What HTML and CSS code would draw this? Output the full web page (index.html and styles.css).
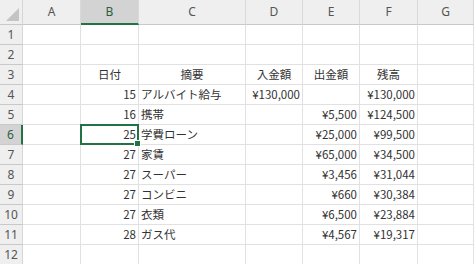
FILE: index.html
```html
<!DOCTYPE html>
<html lang="ja">
<head>
  <meta charset="UTF-8" />
  <title>家計簿</title>
  <link rel="stylesheet" href="styles.css">
</head>
<body>
  <div class="sheet">
    <div class="hd corner"></div>
    <div class="hd col">A</div>
    <div class="hd col sel">B</div>
    <div class="hd col">C</div>
    <div class="hd col">D</div>
    <div class="hd col">E</div>
    <div class="hd col">F</div>
    <div class="hd col">G</div>

    <div class="hd row">1</div>
    <div class="c"></div><div class="c"></div><div class="c"></div><div class="c"></div><div class="c"></div><div class="c"></div><div class="c"></div>

    <div class="hd row">2</div>
    <div class="c"></div><div class="c"></div><div class="c"></div><div class="c"></div><div class="c"></div><div class="c"></div><div class="c"></div>

    <div class="hd row">3</div>
    <div class="c"></div><div class="c mid">日付</div><div class="c mid">摘要</div><div class="c mid">入金額</div><div class="c mid">出金額</div><div class="c mid">残高</div><div class="c"></div>

    <div class="hd row">4</div>
    <div class="c"></div><div class="c num">15</div><div class="c">アルバイト給与</div><div class="c num">¥130,000</div><div class="c num"></div><div class="c num">¥130,000</div><div class="c"></div>

    <div class="hd row">5</div>
    <div class="c"></div><div class="c num">16</div><div class="c">携帯</div><div class="c num"></div><div class="c num">¥5,500</div><div class="c num">¥124,500</div><div class="c"></div>

    <div class="hd row sel">6</div>
    <div class="c"></div><div class="c num active">25</div><div class="c">学費ローン</div><div class="c num"></div><div class="c num">¥25,000</div><div class="c num">¥99,500</div><div class="c"></div>

    <div class="hd row">7</div>
    <div class="c"></div><div class="c num">27</div><div class="c">家賃</div><div class="c num"></div><div class="c num">¥65,000</div><div class="c num">¥34,500</div><div class="c"></div>

    <div class="hd row">8</div>
    <div class="c"></div><div class="c num">27</div><div class="c">スーパー</div><div class="c num"></div><div class="c num">¥3,456</div><div class="c num">¥31,044</div><div class="c"></div>

    <div class="hd row">9</div>
    <div class="c"></div><div class="c num">27</div><div class="c">コンビニ</div><div class="c num"></div><div class="c num">¥660</div><div class="c num">¥30,384</div><div class="c"></div>

    <div class="hd row">10</div>
    <div class="c"></div><div class="c num">27</div><div class="c">衣類</div><div class="c num"></div><div class="c num">¥6,500</div><div class="c num">¥23,884</div><div class="c"></div>

    <div class="hd row">11</div>
    <div class="c"></div><div class="c num">28</div><div class="c">ガス代</div><div class="c num"></div><div class="c num">¥4,567</div><div class="c num">¥19,317</div><div class="c"></div>

    <div class="hd row">12</div>
    <div class="c"></div><div class="c"></div><div class="c"></div><div class="c"></div><div class="c"></div><div class="c"></div><div class="c"></div>
  </div>
</body>
</html>
```

FILE: styles.css
```css
body { margin: 0; background: #fff; font-family: "Noto Sans CJK JP", "Noto Sans", sans-serif; }

.sheet {
  display: grid;
  grid-template-columns: 23px 58px 58px 107px 57px 57px 58px 1fr;
  grid-template-rows: 25px repeat(12, 20px);
  font-size: 11.5px; color: #333;
}

.sheet > div { box-sizing: border-box; line-height: 19px; white-space: nowrap; overflow: hidden; }

.hd {
  background: #efefef; color: #555;
  border-right: 1px solid #d6d6d6; border-bottom: 1px solid #c9c9c9;
  text-align: center; font-family: "Noto Sans", sans-serif; font-size: 12px;
}
.hd.col { line-height: 24px; border-right-color: #d9d9d9; }
.hd.col.sel { background: #d3d3d3; color: #2b5f3e; border-bottom: 2px solid #217346; }
.hd.row.sel { background: #d3d3d3; color: #2b5f3e; border-right: 2px solid #217346; }

.corner { position: relative; }
.corner::after {
  content: ""; position: absolute; right: 3px; bottom: 3px;
  border-left: 13px solid transparent; border-bottom: 13px solid #c4c4c4;
}

.c { border-right: 1px solid #e1e1e1; border-bottom: 1px solid #e1e1e1; padding: 0 2px; }
.c.num { text-align: right; }
.c.mid { text-align: center; }

.c.active { position: relative; overflow: visible; }
.c.active::before {
  content: ""; position: absolute; left: -1px; top: -1px; right: -1px; bottom: -1px;
  border: 2px solid #217346;
}
.c.active::after {
  content: ""; position: absolute; right: -3px; bottom: -3px;
  width: 5px; height: 5px; background: #217346; border: 1px solid #fff;
}
```
